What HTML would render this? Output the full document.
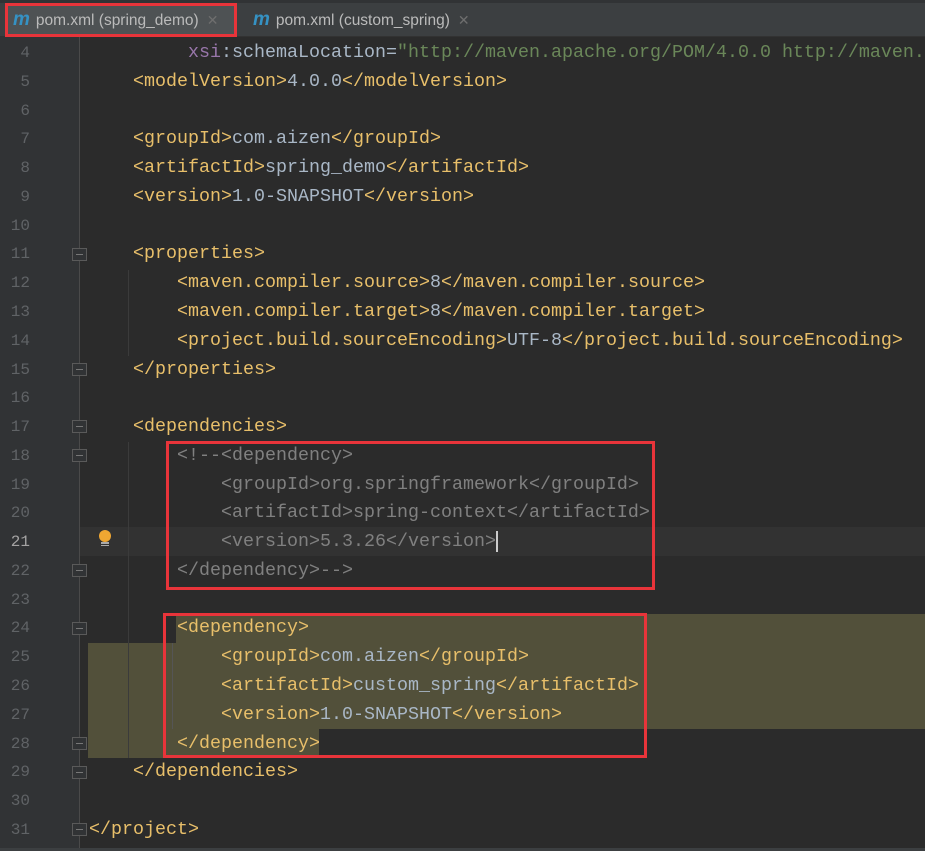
<!DOCTYPE html>
<html><head><meta charset="utf-8"><style>
*{margin:0;padding:0;box-sizing:border-box}
body{width:925px;height:851px;background:#2b2b2b;overflow:hidden;position:relative;font-family:"Liberation Mono",monospace}
.tabs{position:absolute;left:0;top:0;width:925px;height:37px;background:#3c3f41;border-top:3px solid #313335;border-bottom:1px solid #323232}
.tab{position:absolute;top:0;height:34px;font-family:"Liberation Sans",sans-serif;font-size:15.5px;color:#bbbbbb;line-height:34px}
.tab i{font-family:"Liberation Sans",sans-serif;font-weight:bold;font-style:italic;color:#3592c4;font-size:19px;margin-right:6px}
.tab .x{color:#6e6e6e;margin-left:8px;font-size:14px}
.gut{position:absolute;left:0;top:37px;width:80px;height:814px;background:#313335}
.fold{position:absolute;left:79px;top:37px;width:1px;height:814px;background:#4a4a4a}
.ln{position:absolute;left:0;width:30px;text-align:right;font-size:16px;color:#606366;height:28.77px;line-height:28.77px}
.row{position:absolute;left:89px;height:28.77px;line-height:28.77px;font-size:18.33px;white-space:pre;color:#a9b7c6}
.t{color:#e8bf6a}.a{color:#9876aa}.s{color:#6a8759}.c{color:#808080}
.hl{position:absolute;background:#52503a}
.box{position:absolute;border:3px solid #e8343a}
.fm{position:absolute;left:72px;width:15px;height:13px;border:1px solid #5a5a5a;background:#313335}
.fm:after{content:"";position:absolute;left:3px;top:5px;width:7px;height:1px;background:#777}
.guide{position:absolute;width:1px;background:#3b3b3b}
</style></head><body>
<div class="tabs">
<div class="tab" style="left:5px;width:232px;background:#4e5254;padding-left:8px;border-bottom:3px solid #4a88c7"><i>m</i>pom.xml (spring_demo)<span class="x">✕</span></div>
<div class="tab" style="left:245px;padding-left:8px"><i>m</i>pom.xml (custom_spring)<span class="x">✕</span></div>
</div>
<div class="box" style="left:5px;top:3px;width:232px;height:34px"></div>
<div class="gut"></div>
<div style="position:absolute;left:80px;top:527px;width:845px;height:29px;background:#323232"></div>
<div class="hl" style="left:176px;top:614px;width:749px;height:29px"></div>
<div class="hl" style="left:88px;top:643px;width:837px;height:86px"></div>
<div class="hl" style="left:88px;top:729px;width:231px;height:29px"></div>
<div class="fold"></div>
<div class="guide" style="left:128px;top:270px;height:86px"></div>
<div class="guide" style="left:128px;top:442px;height:316px"></div>
<div class="guide" style="left:172px;top:643px;height:86px;background:#555"></div>

<div class="ln" style="top:39px">4</div><div class="ln" style="top:67.8px">5</div><div class="ln" style="top:96.5px">6</div><div class="ln" style="top:125.3px">7</div><div class="ln" style="top:154.1px">8</div><div class="ln" style="top:182.9px">9</div><div class="ln" style="top:211.6px">10</div><div class="ln" style="top:240.4px">11</div><div class="ln" style="top:269.2px">12</div><div class="ln" style="top:297.9px">13</div><div class="ln" style="top:326.7px">14</div><div class="ln" style="top:355.5px">15</div><div class="ln" style="top:384.2px">16</div><div class="ln" style="top:413px">17</div><div class="ln" style="top:441.8px">18</div><div class="ln" style="top:470.6px">19</div><div class="ln" style="top:499.3px">20</div><div class="ln" style="top:528.1px;color:#a4a3a3">21</div><div class="ln" style="top:556.9px">22</div><div class="ln" style="top:585.6px">23</div><div class="ln" style="top:614.4px">24</div><div class="ln" style="top:643.2px">25</div><div class="ln" style="top:671.9px">26</div><div class="ln" style="top:700.7px">27</div><div class="ln" style="top:729.5px">28</div><div class="ln" style="top:758.3px">29</div><div class="ln" style="top:787px">30</div><div class="ln" style="top:815.8px">31</div>

<div class="fm" style="top:248px"></div><div class="fm" style="top:363px"></div><div class="fm" style="top:420px"></div><div class="fm" style="top:449px"></div><div class="fm" style="top:564px"></div><div class="fm" style="top:622px"></div><div class="fm" style="top:737px"></div><div class="fm" style="top:766px"></div><div class="fm" style="top:823px"></div>
<div style="position:absolute;left:99px;top:530px;width:12px;height:12px;border-radius:50%;background:#f0a732"></div>
<div style="position:absolute;left:101px;top:542px;width:8px;height:4px;border-top:2px solid #aaa;border-bottom:1px solid #aaa"></div>

<div class="row" style="top:39px">         <span class="a">xsi</span>:schemaLocation=<span class="s">"http://maven.apache.org/POM/4.0.0 http://maven.</span></div>
<div class="row" style="top:67.8px">    <span class="t">&lt;modelVersion&gt;</span>4.0.0<span class="t">&lt;/modelVersion&gt;</span></div>
<div class="row" style="top:125.3px">    <span class="t">&lt;groupId&gt;</span>com.aizen<span class="t">&lt;/groupId&gt;</span></div>
<div class="row" style="top:154.1px">    <span class="t">&lt;artifactId&gt;</span>spring_demo<span class="t">&lt;/artifactId&gt;</span></div>
<div class="row" style="top:182.9px">    <span class="t">&lt;version&gt;</span>1.0-SNAPSHOT<span class="t">&lt;/version&gt;</span></div>
<div class="row" style="top:240.4px">    <span class="t">&lt;properties&gt;</span></div>
<div class="row" style="top:269.2px">        <span class="t">&lt;maven.compiler.source&gt;</span>8<span class="t">&lt;/maven.compiler.source&gt;</span></div>
<div class="row" style="top:297.9px">        <span class="t">&lt;maven.compiler.target&gt;</span>8<span class="t">&lt;/maven.compiler.target&gt;</span></div>
<div class="row" style="top:326.7px">        <span class="t">&lt;project.build.sourceEncoding&gt;</span>UTF-8<span class="t">&lt;/project.build.sourceEncoding&gt;</span></div>
<div class="row" style="top:355.5px">    <span class="t">&lt;/properties&gt;</span></div>
<div class="row" style="top:413px">    <span class="t">&lt;dependencies&gt;</span></div>
<div class="row c" style="top:441.8px">        &lt;!--&lt;dependency&gt;</div>
<div class="row c" style="top:470.6px">            &lt;groupId&gt;org.springframework&lt;/groupId&gt;</div>
<div class="row c" style="top:499.3px">            &lt;artifactId&gt;spring-context&lt;/artifactId&gt;</div>
<div class="row c" style="top:528.1px">            &lt;version&gt;5.3.26&lt;/version&gt;<span style="border-left:2px solid #ccc"> </span></div>
<div class="row c" style="top:556.9px">        &lt;/dependency&gt;--&gt;</div>
<div class="row" style="top:614.4px">        <span class="t">&lt;dependency&gt;</span></div>
<div class="row" style="top:643.2px">            <span class="t">&lt;groupId&gt;</span>com.aizen<span class="t">&lt;/groupId&gt;</span></div>
<div class="row" style="top:671.9px">            <span class="t">&lt;artifactId&gt;</span>custom_spring<span class="t">&lt;/artifactId&gt;</span></div>
<div class="row" style="top:700.7px">            <span class="t">&lt;version&gt;</span>1.0-SNAPSHOT<span class="t">&lt;/version&gt;</span></div>
<div class="row" style="top:729.5px">        <span class="t">&lt;/dependency&gt;</span></div>
<div class="row" style="top:758.3px">    <span class="t">&lt;/dependencies&gt;</span></div>
<div class="row" style="top:815.8px"><span class="t">&lt;/project&gt;</span></div>

<div class="box" style="left:166px;top:441px;width:489px;height:149px"></div>
<div class="box" style="left:163px;top:613px;width:484px;height:145px"></div>
<div style="position:absolute;left:0;top:848px;width:925px;height:3px;background:#3c3f41"></div>
</body></html>
